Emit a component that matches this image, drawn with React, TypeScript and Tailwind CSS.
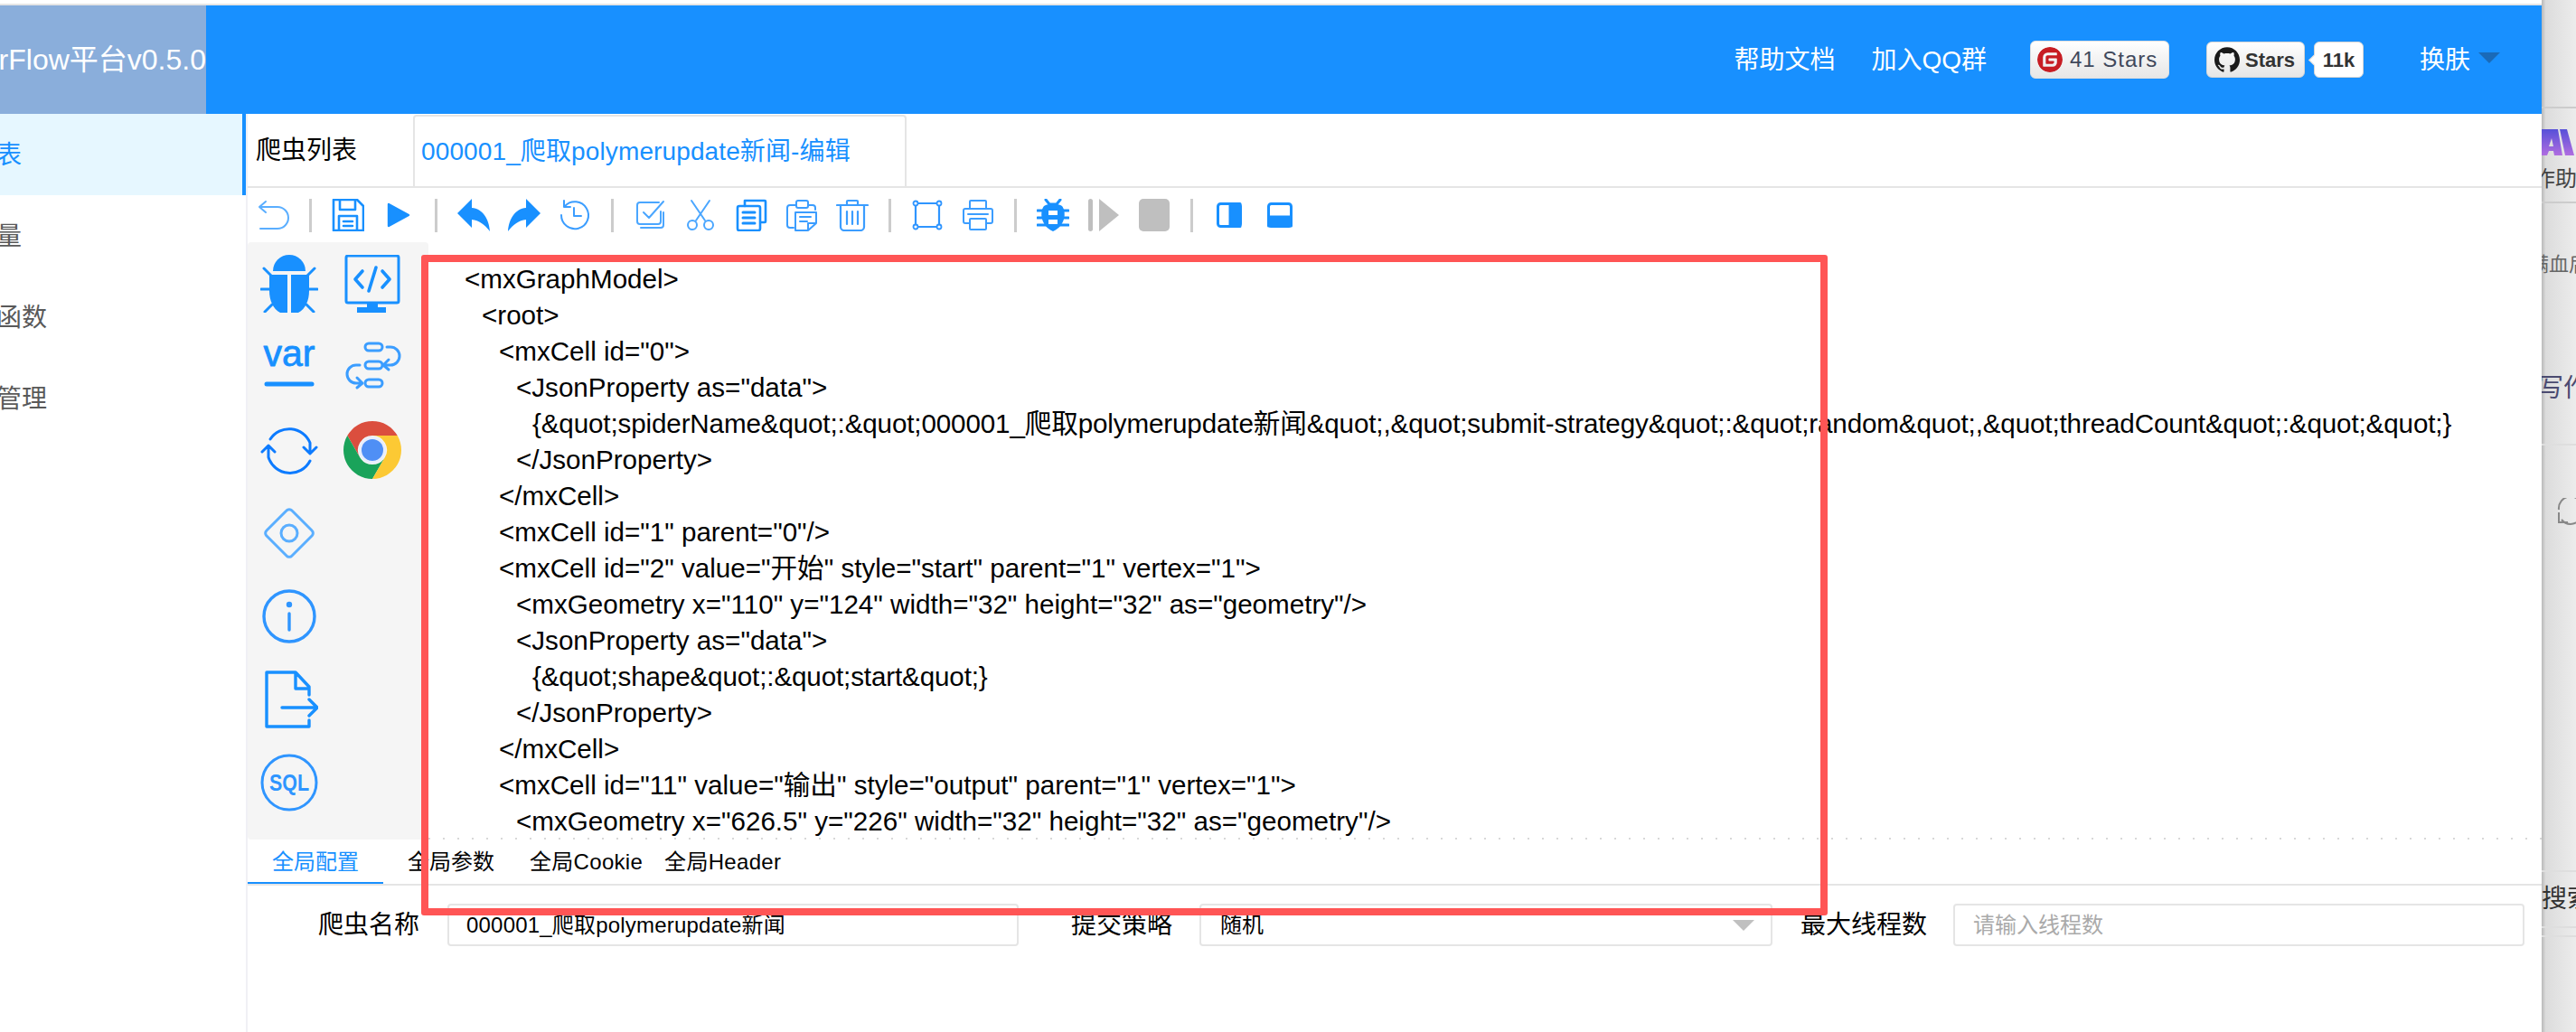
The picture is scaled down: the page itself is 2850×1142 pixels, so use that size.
import type { ReactNode } from "react";
import { SiGitee, SiGithub } from "react-icons/si";

const blue = "#1890ff";

// toolbar icons, all on a 36 box
const Tool = ({ children, color = blue, width = 2.4 }: { children: ReactNode; color?: string; width?: number }) => (
  <div className="flex w-[56px] items-center justify-center">
    <svg width="36" height="36" viewBox="0 0 36 36" fill="none" stroke={color} strokeWidth={width} strokeLinejoin="round" strokeLinecap="round">
      {children}
    </svg>
  </div>
);

const Sep = () => (
  <div className="flex w-[27px] items-center justify-center">
    <div className="h-[37px] w-[3px] bg-[#cccccc]" />
  </div>
);

const Toolbar = () => (
  <div className="flex h-[60px] items-center">
    <Tool color="#5aaeff" width={2}>
      <path d="M10 3L3 9L10 15M3 9H23a11 11 0 0 1 0 24H4" />
    </Tool>
    <Sep />
    <Tool width={2.6}>
      <path d="M2 1H28L35 8V35H2Z" />
      <path d="M9 1V12H26V1M8 35V19H28V35M13 25H23M13 30H23" />
    </Tool>
    <Tool>
      <path d="M7 6L29 18L7 30Z" fill={blue} />
    </Tool>
    <Sep />
    <Tool width={0}>
      <path d="M0 16L16 0V10C28 11 35 22 36 36C30 28 24 24 16 23V32Z" fill={blue} />
    </Tool>
    <Tool width={0}>
      <path d="M36 16L20 0V10C8 11 1 22 0 36C6 28 12 24 20 23V32Z" fill={blue} />
    </Tool>
    <Tool color="#3b9dff" width={2}>
      <path d="M7 8A15 15 0 1 1 3 18M6 2V9H13M17 10V19H25" />
    </Tool>
    <Sep />
    <Tool color="#4aa6ff" width={2}>
      <path d="M28 4H7a3 3 0 0 0-3 3V25a3 3 0 0 0 3 3H27a3 3 0 0 0 3-3V14M11 15L17 21L33 3M33 15V29a3 3 0 0 1-3 3H8" />
    </Tool>
    <Tool color="#4aa6ff" width={2}>
      <path d="M8 2L23 24M28 2L13 24" />
      <circle cx="9" cy="29" r="5" />
      <circle cx="27" cy="29" r="5" />
    </Tool>
    <Tool width={2.6}>
      <path d="M11 8V2H33a1 1 0 0 1 1 1V25a1 1 0 0 1-1 1H29" />
      <rect x="3" y="8" width="25" height="27" rx="2" />
      <path d="M9 15H22M9 21H22M9 27H22" strokeWidth={3} />
    </Tool>
    <Tool color="#3b9dff" width={2}>
      <path d="M11 7H5a3 3 0 0 0-3 3V29a3 3 0 0 0 3 3H9M26 7H30a3 3 0 0 1 3 3V12" />
      <rect x="12" y="2" width="13" height="8" rx="2" />
      <path d="M11 15H34V27L25 35H11Z M34 27H25V35 M16 20H28M16 25H24" />
    </Tool>
    <Tool color="#3b9dff" width={2.2}>
      <path d="M1 7H35M12 7V3a1 1 0 0 1 1-1H23a1 1 0 0 1 1 1V7M5 7V31a4 4 0 0 0 4 4H27a4 4 0 0 0 4-4V7M12 14V28M18 14V28M24 14V28" />
    </Tool>
    <Sep />
    <Tool color="#2f95ff" width={2.2}>
      <path d="M5 5H31V31H5Z" />
      <circle cx="5" cy="5" r="2.5" fill="white" strokeWidth={1.8} />
      <circle cx="31" cy="5" r="2.5" fill="white" strokeWidth={1.8} />
      <circle cx="5" cy="31" r="2.5" fill="white" strokeWidth={1.8} />
      <circle cx="31" cy="31" r="2.5" fill="white" strokeWidth={1.8} />
    </Tool>
    <Tool color="#3b9dff" width={2}>
      <path d="M9 11V3a1 1 0 0 1 1-1H26a1 1 0 0 1 1 1V11" />
      <path d="M9 27H4a2 2 0 0 1-2-2V13a2 2 0 0 1 2-2H32a2 2 0 0 1 2 2V25a2 2 0 0 1-2 2H27" />
      <rect x="9" y="22" width="18" height="12" rx="1" />
      <path d="M7 17H29" />
    </Tool>
    <Sep />
    <Tool width={0}>
      <path d="M10 1L14 6H22L26 1" stroke={blue} strokeWidth={3} />
      <path d="M8 8C12 5 24 5 28 8C33 14 32 30 18 36C4 30 3 14 8 8Z" fill={blue} />
      <path d="M1 13H35M1 21H35M1 29H35" stroke={blue} strokeWidth={3} />
      <rect x="13" y="13" width="10" height="5" fill="white" />
      <rect x="13" y="23" width="10" height="5" fill="white" />
    </Tool>
    <Tool color="#bfbfbf" width={0}>
      <rect x="1" y="0" width="5" height="36" rx="2.5" fill="#bfbfbf" />
      <path d="M13 0L35 18L13 36Z" fill="#bfbfbf" />
    </Tool>
    <Tool color="#bfbfbf" width={0}>
      <rect x="1" y="0" width="34" height="36" rx="5" fill="#bfbfbf" />
    </Tool>
    <Sep />
    <Tool width={3}>
      <rect x="5.5" y="5.5" width="25" height="25" rx="3" />
      <rect x="19" y="5.5" width="11" height="25" fill={blue} />
    </Tool>
    <Tool width={3}>
      <rect x="5.5" y="5.5" width="25" height="25" rx="3" />
      <rect x="5.5" y="20" width="25" height="10" fill={blue} />
    </Tool>
  </div>
);

// side palette, all on a 64 box
const Shape = ({ children, color = blue, width = 3, first = false }: { children: ReactNode; color?: string; width?: number; first?: boolean }) => (
  <div className={first ? "col-start-1 flex items-center justify-center" : "flex items-center justify-center"}>
    <svg width="64" height="64" viewBox="0 0 64 64" fill="none" stroke={color} strokeWidth={width} strokeLinecap="round" strokeLinejoin="round">
      {children}
    </svg>
  </div>
);

const Palette = () => (
  <div className="w-[200px] shrink-0 rounded-[4px] bg-[#f5f5f5]">
    <div className="grid grid-cols-[92px_92px] auto-rows-[92px]">
      <Shape>
        <path d="M14 18A18 18 0 0 1 50 18Z" fill={blue} stroke="none" />
        <path d="M10 22H30V64H22C14 60 10 50 10 40Z M54 22H34V64H42C50 60 54 50 54 40Z" fill={blue} stroke="none" />
        <path d="M4 15L12 23M60 15L52 23M1 38H10M63 38H54M5 63L13 55M59 63L51 55" />
      </Shape>
      <Shape>
        <path d="M5 1H59a2 2 0 0 1 2 2V51a2 2 0 0 1-2 2H5a2 2 0 0 1-2-2V3a2 2 0 0 1 2-2Z" />
        <path d="M21 18L13 27L21 36M43 18L51 27L43 36M36 14L28 40" strokeWidth={3.6} />
        <path d="M15 58H47V64H15Z M26 53H38V58H26Z" fill={blue} stroke="none" />
      </Shape>
      <Shape width={4}>
        <text x="32" y="31" textAnchor="middle" fontSize="41" fontFamily="Liberation Sans" fill={blue} stroke={blue} strokeWidth={0.8}>
          var
        </text>
        <path d="M7 51H57" strokeWidth={5} />
      </Shape>
      <Shape color="#3b9dff" width={3}>
        <rect x="24" y="6" width="19" height="8" rx="4" />
        <rect x="24" y="26" width="19" height="8" rx="4" />
        <rect x="24" y="46" width="19" height="8" rx="4" />
        <path d="M48 10H52A10 10 0 0 1 52 30H45M50 24L44 30L50 35" />
        <path d="M18 30H14A10 10 0 0 0 14 50H20M15 44L21 50L15 55" />
      </Shape>
      <Shape color="#0d7bff" width={3}>
        <path d="M11 20A25 25 0 0 1 55 24V35M48 29L55 36L62 29" />
        <path d="M55 44A25 25 0 0 1 9 40V27M2 34L9 27L16 34" />
      </Shape>
      <Shape width={0}>
        <path d="M59.7 16H32A16 16 0 0 0 18.1 40L4.3 16A32 32 0 0 1 59.7 16Z" fill="#db4e3e" />
        <path d="M4.3 16L18.1 40A16 16 0 0 0 45.9 40L32 64A32 32 0 0 1 4.3 16Z" fill="#1aa35a" />
        <path d="M59.7 16A32 32 0 0 1 32 64L45.9 40A16 16 0 0 0 32 16H59.7Z" fill="#fcc934" />
        <circle cx="32" cy="32" r="15" fill="#e8eefc" />
        <circle cx="32" cy="32" r="12" fill="#4f8ff5" />
      </Shape>
      <Shape color="#5aaeff" width={3} first>
        <path d="M29 7a4 4 0 0 1 6 0L57 29a4 4 0 0 1 0 6L35 57a4 4 0 0 1-6 0L7 35a4 4 0 0 1 0-6Z" />
        <circle cx="32" cy="32" r="9" />
      </Shape>
      <Shape color="#2f95ff" width={3.4} first>
        <circle cx="32" cy="32" r="28" />
        <path d="M32 29V47" />
        <circle cx="32" cy="19" r="1.5" fill="#2f95ff" />
      </Shape>
      <Shape width={3.4} first>
        <path d="M54 27V18L39 2H7V62H54V55M39 2V20H54" />
        <path d="M24 41H62M54 32L63 41L54 50" />
      </Shape>
      <Shape color="#2f95ff" width={3} first>
        <circle cx="32" cy="32" r="30" />
        <text x="32" y="41" textAnchor="middle" fontSize="26" fontWeight="700" fontFamily="Liberation Sans" textLength="44" lengthAdjust="spacingAndGlyphs" fill="#2f95ff" stroke="none">
          SQL
        </text>
      </Shape>
    </div>
  </div>
);

const indents = ["pl-0", "pl-[19px]", "pl-[38px]", "pl-[57px]", "pl-[75px] tracking-[-0.13px]"];

const xml: [number, string][] = [
  [0, "<mxGraphModel>"],
  [1, "<root>"],
  [2, '<mxCell id="0">'],
  [3, '<JsonProperty as="data">'],
  [4, "{&quot;spiderName&quot;:&quot;000001_爬取polymerupdate新闻&quot;,&quot;submit-strategy&quot;:&quot;random&quot;,&quot;threadCount&quot;:&quot;&quot;}"],
  [3, "</JsonProperty>"],
  [2, "</mxCell>"],
  [2, '<mxCell id="1" parent="0"/>'],
  [2, '<mxCell id="2" value="开始" style="start" parent="1" vertex="1">'],
  [3, '<mxGeometry x="110" y="124" width="32" height="32" as="geometry"/>'],
  [3, '<JsonProperty as="data">'],
  [4, "{&quot;shape&quot;:&quot;start&quot;}"],
  [3, "</JsonProperty>"],
  [2, "</mxCell>"],
  [2, '<mxCell id="11" value="输出" style="output" parent="1" vertex="1">'],
  [3, '<mxGeometry x="626.5" y="226" width="32" height="32" as="geometry"/>'],
];

const sideItems = [
  { label: "表", active: true },
  { label: "量" },
  { label: "函数" },
  { label: "管理" },
];

const Sidebar = () => (
  <aside className="w-[272px] shrink-0 overflow-hidden text-[28px] text-[#595959]">
    {sideItems.map((item) => (
      <div
        key={item.label}
        className={
          item.active
            ? "flex h-[90px] items-center border-r-4 border-[#1890ff] bg-[#e6f7ff] pt-[2px] text-[#1890ff]"
            : "flex h-[90px] items-center pt-[2px]"
        }
      >
        <span className="-ml-[4px]">{item.label}</span>
      </div>
    ))}
  </aside>
);

const Header = () => (
  <header className="flex h-[120px] items-center bg-[#1890ff] pt-[2px] text-[28px] text-white">
    <div className="-mt-[2px] flex h-[120px] w-[228px] items-center justify-end overflow-hidden whitespace-nowrap bg-[#8aaedb] text-[32px]">
      rFlow平台v0.5.0
    </div>
    <div className="ml-auto">帮助文档</div>
    <div className="ml-[40px]">加入QQ群</div>
    <div className="-mt-[2px] ml-[48px] flex h-[42px] w-[154px] items-center rounded-[6px] border border-[#e0e0e0] bg-gradient-to-b from-white to-[#e6e6e6] pl-[7px] text-[24px] tracking-[1px] text-[#40485b]">
      <SiGitee size={28} className="shrink-0 rounded-full text-[#c71d23]" />
      <span className="ml-[8px]">41 Stars</span>
    </div>
    <div className="-mt-[2px] ml-[41px] flex h-[40px] w-[109px] items-center rounded-[6px] border border-[#d5d5d5] bg-gradient-to-b from-white to-[#e6e6e6] pl-[8px] text-[22px] font-bold text-[#333333]">
      <SiGithub size={28} className="shrink-0 text-[#1a1a1a]" />
      <span className="ml-[6px]">Stars</span>
    </div>
    <div className="relative -mt-[2px] ml-[10px] flex h-[40px] w-[55px] items-center justify-center rounded-[6px] border border-[#d5d5d5] bg-white text-[22px] font-bold text-[#333333]">
      <div className="absolute -left-[5px] top-[15px] h-[9px] w-[9px] rotate-45 border-b border-l border-[#d5d5d5] bg-white" />
      11k
    </div>
    <div className="ml-[62px]">换肤</div>
    <div className="-mt-[6px] ml-[9px] mr-[46px] h-0 w-0 border-x-[12px] border-t-[12px] border-x-transparent border-t-[#1a6ab8]" />
  </header>
);

const RightPanel = () => (
  <div className="h-full w-[38px] shrink-0 overflow-hidden whitespace-nowrap bg-[linear-gradient(90deg,#b8b8b8,#dcdcdc_12%,#ececec)]">
    <div className="h-[120px] border-b-2 border-[#cccccc]" />
    <div className="h-[105px] border-b-2 border-[#cccccc] pt-[23px]">
      <svg width="38" height="29" viewBox="0 0 38 29">
        <defs>
          <linearGradient id="ai" x1="0" y1="0" x2="0" y2="1">
            <stop offset="0" stopColor="#5650d8" />
            <stop offset="1" stopColor="#b06de0" />
          </linearGradient>
        </defs>
        <path fillRule="evenodd" d="M6 0H18L23 29H14L13 24H8L6 29H0V0ZM11 10L8 19H13Z" fill="url(#ai)" />
        <path d="M20 0H28L36 29H26Z" fill="url(#ai)" />
      </svg>
      <div className="-ml-[9px] mt-[14px] text-[24px] leading-[24px] text-[#444444]">作助</div>
    </div>
    <div className="h-[268px] border-b-2 border-[#dedede] pt-[56px]">
      <div className="-ml-[14px] text-[22px] leading-[24px] text-[#666666]">满血后</div>
      <div className="mt-[109px] -ml-[4px] text-[28px] leading-[32px] text-[#4a4a70]">写作</div>
    </div>
    <div className="h-[472px] border-b-2 border-[#dedede] pt-[58px]">
      <svg className="ml-[17px]" width="30" height="30" viewBox="0 0 30 30" fill="none" stroke="#888888" strokeWidth="2">
        <path d="M2 13A13 13 0 0 1 28 10M28 17A13 13 0 0 1 5 24M2 16V27H12" />
      </svg>
    </div>
    <div className="h-[62px] border-b-2 border-[#dedede] pt-[14px] text-[28px] leading-[32px] text-[#333333]">搜索</div>
    <div className="mt-[8px] border-t-2 border-[#dedede]" />
  </div>
);

export default function App() {
  return (
    <div className="relative flex h-[1142px] w-[2850px] overflow-hidden bg-white text-black [font-family:'Liberation_Sans','Noto_Sans_CJK_SC',sans-serif]">
      <div className="flex min-w-0 flex-1 flex-col">
        <div className="h-[6px] border-b-2 border-[#e5e5e5]" />
        <Header />
        <div className="flex min-h-0 flex-1">
          <Sidebar />
          <main className="flex min-w-0 flex-1 flex-col border-l-2 border-[#f0f0f5]">
            <div className="flex h-[82px] border-b-2 border-[#e5e5e5] text-[28px]">
              <div className="flex w-[183px] items-center pl-[9px] pt-[2px]">爬虫列表</div>
              <div className="mt-[1px] flex w-[546px] items-center rounded-t-[4px] border-x-2 border-t-2 border-[#e5e5e5] pl-[7px] pt-[1px] tracking-[0.12px] text-[#1890ff]">
                000001_爬取polymerupdate新闻-编辑
              </div>
            </div>
            <Toolbar />
            <div className="flex h-[661px] min-h-0">
              <Palette />
              <div className="flex min-w-0 flex-1 flex-col">
                <div className="min-h-0 flex-1 overflow-hidden pl-[40px] pt-[21px] text-[29.6px] leading-[40px] whitespace-nowrap">
                  {xml.map(([depth, text], i) => (
                    <div key={i} className={indents[depth]}>
                      {text}
                    </div>
                  ))}
                </div>
                <div className="h-[2px] bg-[repeating-linear-gradient(90deg,#d8d8d8_0_2px,transparent_2px_16px)]" />
              </div>
            </div>
            <div className="flex h-[51px] items-center border-b-2 border-[#e5e5e5] text-[24px]">
              <div className="relative flex h-full w-[150px] items-center justify-center text-[#1890ff]">
                全局配置
                <div className="absolute bottom-0 left-0 right-0 h-[2px] bg-[#1890ff]" />
              </div>
              <div className="ml-[27px]">全局参数</div>
              <div className="ml-[39px] tracking-[0.3px]">全局Cookie</div>
              <div className="ml-[24px] tracking-[0.3px]">全局Header</div>
            </div>
            <div className="flex items-center pl-[78px] pt-[20px] text-[28px]">
              <div className="w-[112px]">爬虫名称</div>
              <div className="ml-[31px] flex h-[47px] w-[632px] items-center rounded-[4px] border-2 border-[#e5e5e5] pl-[19px] text-[24px] tracking-[0.2px]">
                000001_爬取polymerupdate新闻
              </div>
              <div className="ml-[58px] w-[112px]">提交策略</div>
              <div className="ml-[30px] flex h-[47px] w-[634px] items-center justify-between rounded-[4px] border-2 border-[#e5e5e5] pl-[21px] pr-[18px] text-[24px]">
                随机
                <div className="h-0 w-0 border-x-[12px] border-t-[12px] border-x-transparent border-t-[#c0c0c0]" />
              </div>
              <div className="ml-[31px] w-[140px]">最大线程数</div>
              <div className="ml-[29px] flex h-[47px] w-[632px] items-center rounded-[4px] border-2 border-[#e5e5e5] pl-[20px] text-[24px] text-[#aaaaaa]">
                请输入线程数
              </div>
            </div>
          </main>
        </div>
      </div>
      <RightPanel />
      {/* red annotation drawn over the page */}
      <div className="pointer-events-none absolute left-[466px] top-[282px] h-[731px] w-[1556px] rounded-[3px] border-8 border-[#ff5555]" />
    </div>
  );
}
